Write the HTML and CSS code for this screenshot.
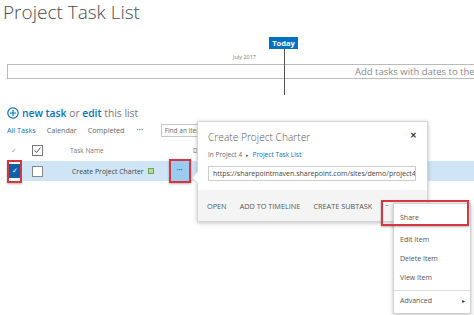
FILE: index.html
```html
<!DOCTYPE html>
<html lang="en">
<head>
  <meta charset="UTF-8">
  <title>Project Task List</title>
  <link rel="stylesheet" href="styles.css">
</head>
<body>
  <div class="page">
    <h1 class="title">Project Task List</h1>

    <!-- Timeline -->
    <div class="timeline">
      <div class="today">Today</div>
      <div class="today-line"></div>
      <div class="month">July 2017</div>
      <div class="tl-box"><span>Add tasks with dates to the timeline</span></div>
    </div>

    <!-- New task -->
    <div class="newtask">
      <svg class="plus" width="12" height="12" viewBox="0 0 12 12">
        <circle cx="6" cy="6" r="5.2" fill="none" stroke="#0072c6" stroke-width="1.2"/>
        <path d="M6 3v6M3 6h6" stroke="#0072c6" stroke-width="1.2"/>
      </svg>
      <span class="newtask-text"><span class="link">new task</span> or <span class="link">edit</span> this list</span>
    </div>

    <!-- Views -->
    <div class="views">
      <span class="view active">All Tasks</span>
      <span class="view">Calendar</span>
      <span class="view">Completed</span>
      <span class="view dots">•••</span>
      <div class="search">Find an item</div>
    </div>

    <!-- List -->
    <div class="list-head">
      <span class="col-check">✓</span>
      <span class="col-box">
        <svg width="11" height="11" viewBox="0 0 11 11">
          <rect x="0.5" y="0.5" width="10" height="10" fill="#fff" stroke="#777"/>
          <path d="M2.5 5.5l2 2 4-5" fill="none" stroke="#555" stroke-width="1"/>
        </svg>
      </span>
      <span class="col-name">Task Name</span>
      <span class="col-due">Due Date</span>
    </div>

    <div class="list-row">
      <div class="sel-cell"><span class="sel-box">✓</span></div>
      <div class="row-body">
        <span class="cbox"></span>
        <span class="task">Create Project Charter</span>
        <span class="new-icon"></span>
        <span class="ellipsis">•••</span>
      </div>
    </div>

    <!-- Callout -->
    <div class="callout">
      <div class="callout-arrow"></div>
      <div class="callout-main">
        <div class="callout-title">Create Project Charter</div>
        <span class="close">✕</span>
        <div class="crumb">In Project 4 <span class="crumb-sep">▸</span> <span class="crumb-link">Project Task List</span></div>
        <div class="url">https://sharepointmaven.sharepoint.com/sites/demo/project4/Lists/Tasks</div>
      </div>
      <div class="callout-actions">
        <span>OPEN</span>
        <span>ADD TO TIMELINE</span>
        <span>CREATE SUBTASK</span>
        <span class="more">••</span>
      </div>
    </div>

    <!-- Context menu -->
    <ul class="menu">
      <li class="menu-item share">Share</li>
      <li class="menu-item">Edit Item</li>
      <li class="menu-item">Delete Item</li>
      <li class="menu-item">View Item</li>
      <li class="menu-item sub">Advanced <span class="caret">▸</span></li>
    </ul>
  </div>
</body>
</html>
```

FILE: styles.css
```css
body {
  margin: 0;
  font-family: 'Open Sans', sans-serif;
  color: #444;
  background: #fff;
  overflow: hidden;
}
.page {
  position: relative;
  width: 474px;
  height: 315px;
  overflow: hidden;
}
.title {
  margin: 0;
  padding-left: 3px;
  font-size: 19px;
  font-weight: 300;
  line-height: 24px;
  color: #4a4a4a;
}

/* timeline */
.timeline {
  position: relative;
  height: 55px;
}
.today {
  position: absolute;
  left: 269px;
  top: 13px;
  width: 29px;
  height: 12px;
  background: #0072c6;
  color: #fff;
  font-size: 7.5px;
  font-weight: 700;
  line-height: 12px;
  text-align: center;
}
.today-line {
  position: absolute;
  left: 284px;
  top: 25px;
  width: 1px;
  height: 46px;
  background: #555;
  z-index: 2;
}
.month {
  padding: 28px 0 0 233px;
  font-size: 5.5px;
  line-height: 10px;
  color: #777;
}
.tl-box {
  margin: 2px 0 0 7px;
  width: 540px;
  height: 15px;
  box-sizing: border-box;
  border: 1px solid #bbb;
  border-width: 1px 0 1.5px 1px;
  padding-left: 347px;
  font-size: 9.5px;
  line-height: 13px;
  color: #888;
  white-space: nowrap;
}

/* new task */
.newtask {
  display: flex;
  align-items: center;
  gap: 3px;
  margin-top: 25px;
  padding-left: 7px;
  height: 18px;
}
.newtask-text {
  font-size: 10.3px;
  color: #777;
  white-space: nowrap;
}
.link {
  color: #0072c6;
  font-weight: 600;
}

/* views */
.views {
  display: flex;
  align-items: center;
  height: 16px;
  padding-left: 7px;
  font-size: 7.2px;
  color: #666;
}
.view {
  margin-right: 11px;
}
.view.active {
  color: #0072c6;
}
.view.dots {
  font-size: 5px;
  letter-spacing: 0.5px;
  margin-left: 1px;
  margin-right: 17px;
}
.search {
  width: 60px;
  height: 11px;
  border: 1px solid #c6c6c6;
  font-size: 6.5px;
  line-height: 11px;
  padding-left: 3px;
  color: #666;
  white-space: nowrap;
  overflow: hidden;
}

/* list */
.list-head {
  display: flex;
  align-items: center;
  height: 20px;
  margin-top: 2px;
  font-size: 6.5px;
  color: #777;
}
.col-check {
  width: 32px;
  padding-left: 11px;
  box-sizing: border-box;
  color: #aaa;
  font-size: 7px;
}
.col-box {
  width: 38px;
  display: flex;
}
.col-name {
  width: 123px;
}
.list-row {
  display: flex;
  align-items: center;
  height: 20px;
  margin-top: 1px;
}
.sel-cell {
  width: 15px;
  height: 23px;
  margin-left: 7px;
  box-sizing: border-box;
  border: 2px solid #d4373f;
  display: flex;
  align-items: center;
  justify-content: center;
  box-shadow: 0 1px 2px rgba(0,0,0,0.3);
}
.sel-box {
  width: 11px;
  height: 14px;
  background: #0f5faa;
  color: #fff;
  font-size: 7px;
  line-height: 14px;
  text-align: center;
}
.row-body {
  flex: 1;
  display: flex;
  align-items: center;
  height: 20px;
  background: #cfe5f6;
}
.cbox {
  width: 9px;
  height: 9px;
  border: 1px solid #888;
  background: #fff;
  margin-left: 10px;
}
.task {
  margin-left: 29px;
  font-size: 6.9px;
  color: #444;
}
.new-icon {
  width: 4px;
  height: 4px;
  margin-left: 4px;
  border: 1px solid #6aa84f;
  background: #b6d7a8;
}
.ellipsis {
  margin-left: 15px;
  width: 18px;
  height: 20px;
  border: 2px solid #d4373f;
  background: #9dcaef;
  color: #2b6cb3;
  font-size: 5px;
  line-height: 18px;
  text-align: center;
  box-shadow: 0 1px 2px rgba(0,0,0,0.3);
}

/* callout */
.callout {
  position: absolute;
  left: 197px;
  top: 121px;
  width: 231px;
  height: 101px;
  box-sizing: border-box;
  background: #fff;
  border: 1px solid #d6d6d6;
  box-shadow: 0 1px 4px rgba(0,0,0,0.25);
  display: flex;
  flex-direction: column;
  z-index: 3;
}
.callout-arrow {
  position: absolute;
  left: -5px;
  top: 51px;
  width: 8px;
  height: 8px;
  background: #fff;
  border-left: 1px solid #d6d6d6;
  border-bottom: 1px solid #d6d6d6;
  transform: rotate(45deg);
}
.callout-main {
  position: relative;
  padding: 8px 10px 0 10px;
  flex: 1;
}
.callout-title {
  font-size: 10.2px;
  font-weight: 300;
  color: #555;
  line-height: 15px;
}
.close {
  position: absolute;
  right: 10px;
  top: 7px;
  font-size: 8px;
  font-weight: 700;
  color: #333;
}
.crumb {
  margin-top: 5px;
  font-size: 6.5px;
  color: #666;
  line-height: 9px;
}
.crumb-sep {
  font-size: 5px;
  color: #555;
  margin: 0 2px;
}
.crumb-link {
  color: #0072c6;
}
.url {
  margin-top: 6px;
  width: 208px;
  height: 15px;
  box-sizing: border-box;
  border: 1px solid #ccc;
  padding-left: 4px;
  font-size: 7px;
  line-height: 13px;
  color: #444;
  white-space: nowrap;
  overflow: hidden;
}
.callout-actions {
  display: flex;
  align-items: center;
  height: 31px;
  padding-left: 9px;
  background: #f4f4f4;
  font-size: 7.3px;
  color: #555;
}
.callout-actions span {
  margin-right: 13px;
}
.callout-actions .more {
  font-size: 4px;
}

/* context menu */
.menu {
  position: absolute;
  left: 393px;
  top: 203px;
  width: 76px;
  margin: 0;
  padding: 4px 0 2px;
  list-style: none;
  background: #fff;
  border: 1px solid #d0d0d0;
  box-shadow: 0 1px 4px rgba(0,0,0,0.25);
  z-index: 4;
}
.menu-item {
  position: relative;
  height: 19px;
  padding-left: 6px;
  font-size: 7px;
  line-height: 19px;
  color: #555;
}
.menu-item.share {
  height: 20px;
  line-height: 20px;
  margin-bottom: 2px;
}
.menu-item.share::after {
  content: "";
  position: absolute;
  left: -13px;
  right: 1px;
  top: -8px;
  bottom: 2px;
  border: 2.5px solid #d4373f;
  box-shadow: 0 1px 2px rgba(0,0,0,0.3);
}
.menu-item.sub {
  border-top: 1px solid #ddd;
  margin-top: 3px;
  height: 20px;
  line-height: 20px;
}
.caret {
  position: absolute;
  right: 5px;
  font-size: 6px;
  color: #333;
}
```
